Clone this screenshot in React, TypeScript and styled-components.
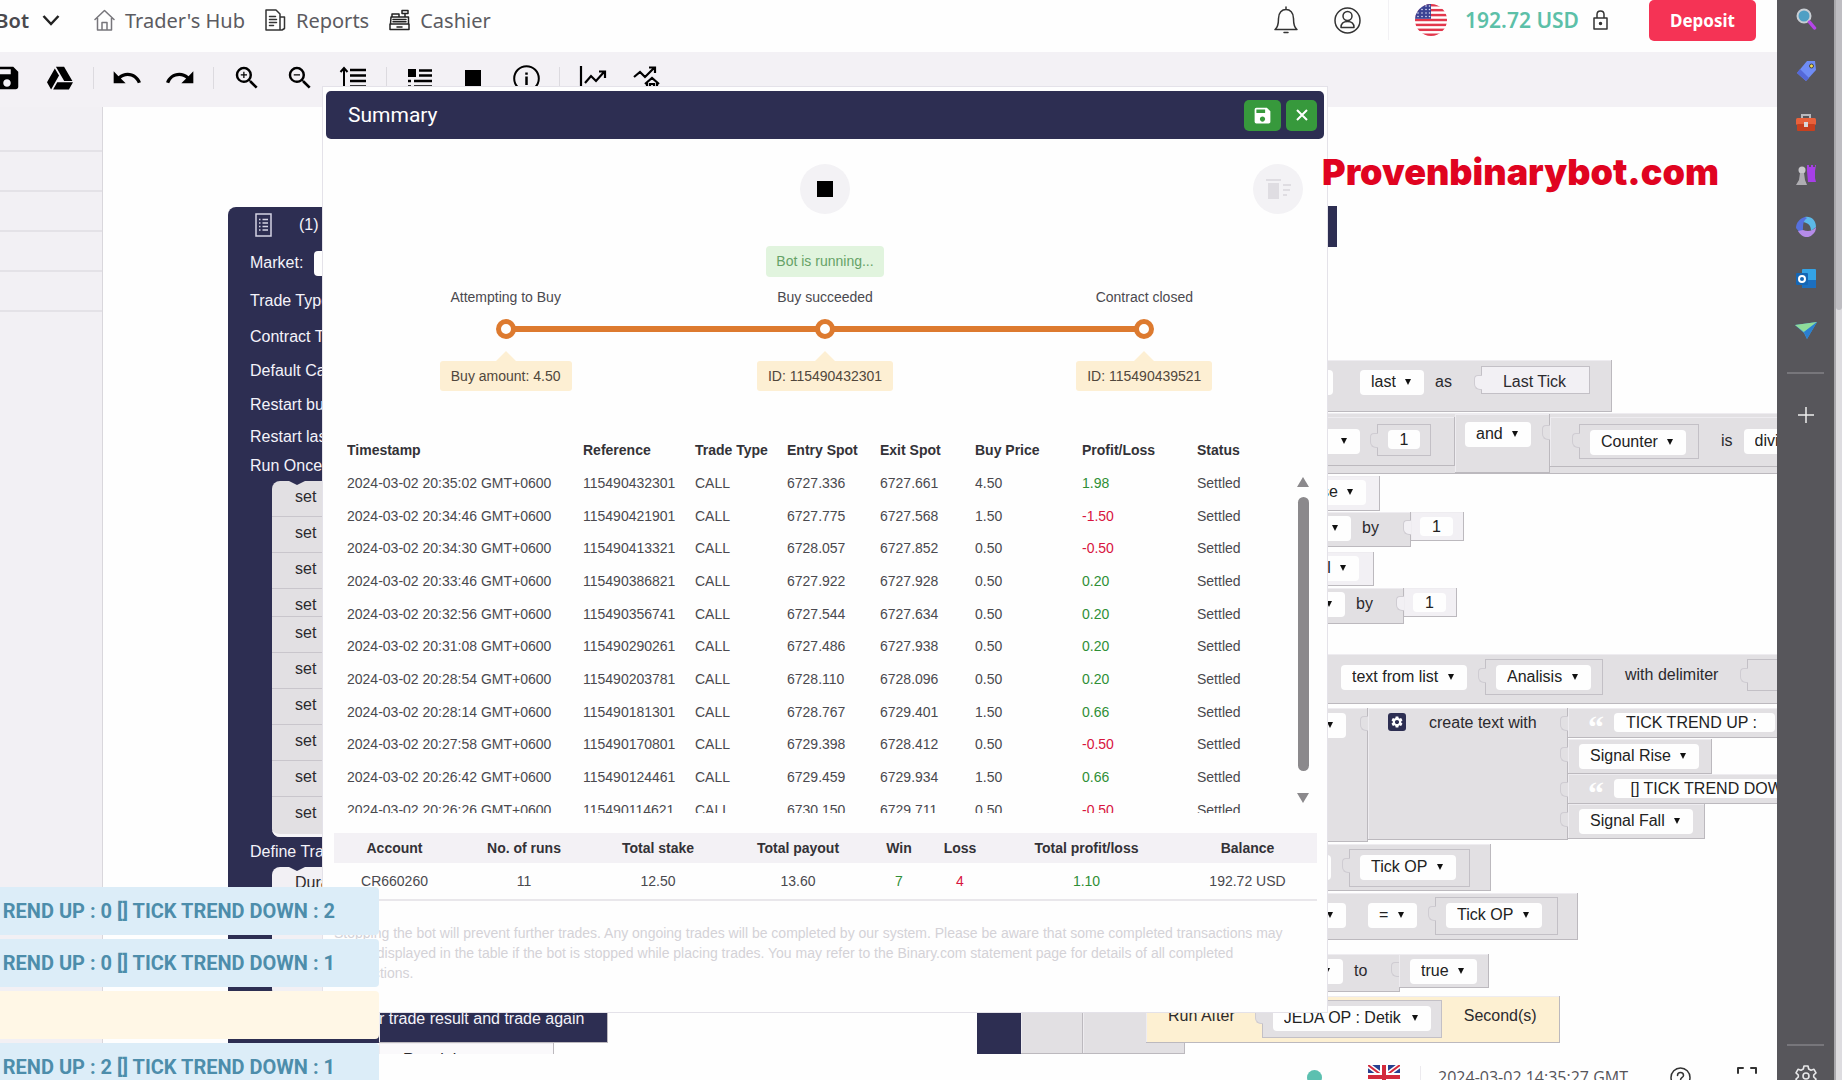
import React from "react";
import styled, { createGlobalStyle, css } from "styled-components";
import { MdSave, MdOutlineZoomIn, MdOutlineZoomOut, MdUndo, MdRedo, MdSettings } from "react-icons/md";
import { FaGoogleDrive } from "react-icons/fa";

const navy = "#2d2e52";
const grey = "#e2e0e3";
const pale = "#f2f0f4";
const edge = "#bcb9be";

const Global = createGlobalStyle`
  *, *::before, *::after { box-sizing: border-box; }
  body { margin: 0; background: #fefefe; font-family: "Liberation Sans", Arial, sans-serif; font-size: 16px; overflow: hidden; }
  button, input, select { font: inherit; color: inherit; }
  svg { display: block; flex: none; }
`;

/* ---------- shell ---------- */
const Page = styled.div`
  position: relative;
  display: flex;
  height: 100vh;
  overflow: hidden;
`;
const Main = styled.main`
  flex: 1;
  min-width: 0;
  display: flex;
  flex-direction: column;
  overflow: hidden;
`;

const Header = styled.header`
  display: flex;
  align-items: center;
  height: 52px;
  padding: 0 21px 12px 0;
  font-family: "Noto Sans", sans-serif;
  font-size: 20px;
  color: #5c5b61;
  background: #fefefe;
`;
const Brand = styled.button`
  display: flex;
  align-items: center;
  gap: 13px;
  padding: 0;
  margin-right: 34px;
  border: 0;
  background: none;
  color: #4a494e;
  font-weight: 600;
`;
const BrandName = styled.span`
  display: flex;
  justify-content: flex-end;
  width: 29px;
`;
const Nav = styled.nav`
  display: flex;
  gap: 20px;
`;
const NavLink = styled.a`
  display: flex;
  align-items: center;
  gap: 10px;
  color: inherit;
  text-decoration: none;
  white-space: nowrap;
`;
const Account = styled.div`
  display: flex;
  align-items: center;
  height: 40px;
  margin-left: auto;
`;
const IconButton = styled.button`
  display: flex;
  padding: 0;
  margin-right: 36px;
  border: 0;
  background: none;
`;
const HeaderRule = styled.span`
  width: 1px;
  height: 40px;
  margin: 0 26px 0 -9px;
  background: #f2f1f4;
`;
const Balance = styled.span`
  display: flex;
  align-items: center;
  gap: 14px;
  margin: 0 41px 0 18px;
  color: #5cc0a8;
  font-size: 21px;
  font-weight: 600;
`;
const Deposit = styled.button`
  width: 107px;
  height: 41px;
  padding: 0;
  border: 0;
  border-radius: 5px;
  background: #f53355;
  color: #fff;
  font-family: "Noto Sans", sans-serif;
  font-size: 17px;
  font-weight: 700;
`;

const Toolbar = styled.div`
  display: flex;
  align-items: center;
  height: 55px;
  padding-bottom: 3px;
  background: #f3f1f5;
`;
const ToolGroup = styled.div`
  display: flex;
  align-items: center;
  gap: 25px;
  height: 22px;
  padding: 0 19px;
  border-right: 1px solid #dcdadf;
  &:first-child { padding-left: 0; margin-left: -7px; }
  &:last-child { border: 0; }
`;
const Tool = styled.button`
  display: flex;
  align-items: center;
  justify-content: center;
  width: 28px;
  height: 28px;
  padding: 0;
  border: 0;
  background: none;
  color: #000;
`;

/* ---------- workspace ---------- */
const Workspace = styled.section`
  flex: 1;
  min-height: 0;
  display: flex;
  overflow: hidden;
`;
const Toolbox = styled.ul`
  width: 103px;
  margin: 0;
  padding: 5px 0 0;
  list-style: none;
  background: ${pale};
  border-right: 1px solid #d9d7dc;
`;
const ToolboxRow = styled.li`
  height: 40px;
  border-bottom: 2px solid #e4e2e7;
`;
const Canvas = styled.div`
  position: relative;
  flex: 1;
  overflow: hidden;
  background: #fefefe;
`;

/* Nodes keep workspace coordinates, which start at the page's origin. */
type BlockProps = { $x: number; $y: number; $w: number; $h: number; $tone?: string; $pad?: string; $tab?: boolean };
const tab = css`
  &::before {
    content: "";
    position: absolute;
    left: -8px;
    top: 8px;
    width: 8px;
    height: 15px;
    border: 1px solid #cfccd2;
    border-right: 0;
    border-radius: 4px 0 0 6px;
    background: inherit;
  }
`;
const Block = styled.div<BlockProps>`
  position: absolute;
  left: ${(p) => p.$x - 103}px;
  top: ${(p) => p.$y - 107}px;
  width: ${(p) => p.$w}px;
  height: ${(p) => p.$h}px;
  display: flex;
  align-items: flex-start;
  padding: ${(p) => p.$pad ?? "0"};
  color: #2b2a2e;
  white-space: nowrap;
  background: ${(p) => p.$tone ?? grey};
  box-shadow: inset -1px -1px 0 ${edge}, inset 1px 1px 0 #eeecf0;
  ${(p) => p.$tab && tab}
`;
const Socket = styled.div<{ $w?: number; $h: number; $m?: string; $tone?: string }>`
  position: relative;
  display: flex;
  align-items: flex-start;
  flex: none;
  width: ${(p) => (p.$w ? p.$w + "px" : "auto")};
  height: ${(p) => p.$h}px;
  padding: 5px 10px;
  margin: ${(p) => p.$m ?? "0"};
  border: 1px solid #c3c0c6;
  background: ${(p) => p.$tone ?? grey};
  ${tab}
`;
const Word = styled.span<{ $m?: string }>`
  line-height: 24px;
  margin: ${(p) => p.$m ?? "0 11px"};
`;
const Drop = styled.label`
  position: relative;
  display: flex;
  flex: none;
  height: 25px;
  background: #fefefe;
  border-radius: 4px;
  svg { position: absolute; right: 13px; top: 9px; pointer-events: none; }
`;
const Select = styled.select<{ $w?: number }>`
  appearance: none;
  width: ${(p) => (p.$w ? p.$w + "px" : "auto")};
  height: 25px;
  padding: 0 28px 2px 11px;
  border: 0;
  background: transparent;
  color: #222;
`;
const Value = styled.input<{ $w: number; $left?: boolean }>`
  flex: none;
  width: ${(p) => p.$w}px;
  height: 19px;
  padding: ${(p) => (p.$left ? "0 12px" : "0")};
  border: 0;
  border-radius: 4px;
  background: #fefefe;
  text-align: ${(p) => (p.$left ? "left" : "center")};
  color: #222;
`;
const Quote = styled.span`
  flex: none;
  width: 46px;
  padding-left: 20px;
  font-family: "Liberation Serif", serif;
  font-size: 32px;
  font-weight: 700;
  line-height: 28px;
  height: 20px;
  overflow: hidden;
  color: #fefefe;
`;
const Gear = styled.button`
  display: flex;
  align-items: center;
  justify-content: center;
  width: 18px;
  height: 18px;
  padding: 0;
  margin: 5px 12px 0 20px;
  border: 0;
  border-radius: 3px;
  background: ${navy};
  color: #fff;
`;
const TailText = styled.span`
  color: #f4f3fa;
  line-height: 22px;
`;
const Label = styled.span`
  padding-left: 11px;
  line-height: 20px;
`;
const Lowered = styled.div`
  padding-top: 5px;
`;

const Root = styled.div<{ $x: number; $y: number; $w: number; $h: number }>`
  position: absolute;
  left: ${(p) => p.$x - 103}px;
  top: ${(p) => p.$y - 107}px;
  width: ${(p) => p.$w}px;
  height: ${(p) => p.$h}px;
  border-radius: 8px 0 0 0;
  background: ${navy};
  color: #f4f3fa;
  overflow: hidden;
  white-space: nowrap;
`;
const RootRow = styled.div<{ $h: number }>`
  display: flex;
  align-items: center;
  gap: 11px;
  height: ${(p) => p.$h}px;
  padding-left: 22px;
`;
const RootTitle = styled.div`
  display: flex;
  align-items: center;
  gap: 27px;
  height: 36px;
  padding-left: 27px;
`;
const Stack = styled.div<{ $tone: string }>`
  position: relative;
  margin-left: 44px;
  border-radius: 8px 0 0 8px;
  background: ${(p) => p.$tone};
  color: #2b2a2e;
  &::before {
    content: "";
    position: absolute;
    left: 17px;
    top: 0;
    border: 8px solid transparent;
    border-top: 4px solid ${navy};
    border-bottom: 0;
  }
`;
const SetRow = styled.div<{ $h: number }>`
  height: ${(p) => p.$h}px;
  padding-left: 23px;
  line-height: 32px;
  border-bottom: 1px solid #c9c6cc;
  &:last-child { border-bottom: 3px solid #f6f5f8; border-radius: 0 0 0 8px; }
`;

/* ---------- footer ---------- */
const Footer = styled.footer`
  display: flex;
  justify-content: flex-end;
  height: 26px;
  padding-right: 20px;
  background: #fefefe;
  font-family: "Open Sans", sans-serif;
  font-size: 16px;
  color: #55545a;
`;
const FooterItems = styled.div`
  display: flex;
  align-items: center;
  height: 46px;
`;
const Dot = styled.span`
  width: 15px;
  height: 15px;
  margin-right: 46px;
  border-radius: 50%;
  background: #5cc0b0;
`;
const FooterTime = styled.span`
  padding-left: 17px;
  margin: 0 42px 0 20px;
  border-left: 1px solid #eceaee;
`;
const FullScreen = styled.button`
  padding: 0;
  margin-left: 46px;
  border: 0;
  background: none;
`;

/* ---------- browser side strip ---------- */
const Strip = styled.aside`
  display: flex;
  flex-direction: column;
  align-items: center;
  gap: 30px;
  width: 57px;
  padding-top: 8px;
  background: #57565b;
`;
const StripButton = styled.button`
  display: flex;
  padding: 0;
  border: 0;
  background: none;
`;
const StripRule = styled.span`
  width: 37px;
  height: 2px;
  background: #77767b;
`;
const StripEnd = styled.div`
  display: flex;
  flex-direction: column;
  align-items: center;
  gap: 18px;
  margin: auto 0 -8px;
`;
const PageScroll = styled.div`
  width: 8px;
  background: #dddce0;
  border-left: 2px solid #a9a8ac;
`;
const PageThumb = styled.div`
  height: 310px;
  background: #bebdc2;
  border-radius: 0 0 4px 4px;
`;

/* ---------- summary dialog ---------- */
const Dialog = styled.section`
  position: absolute;
  left: 322px;
  top: 86px;
  width: 1006px;
  height: 927px;
  padding: 4px 3px;
  border: 1px solid #e4e2e9;
  background: #fefefe;
  font-size: 14px;
  color: #4a494e;
`;
const TitleBar = styled.header`
  display: flex;
  align-items: center;
  gap: 5px;
  height: 48px;
  padding: 0 7px 0 22px;
  border-radius: 5px;
  background: ${navy};
`;
const Title = styled.h2`
  margin: 0 auto 0 0;
  font-family: Roboto, sans-serif;
  font-size: 21px;
  font-weight: 400;
  color: #fff;
`;
const TitleButton = styled.button<{ $w: number }>`
  display: flex;
  align-items: center;
  justify-content: center;
  width: ${(p) => p.$w}px;
  height: 31px;
  padding: 0;
  border: 0;
  border-radius: 5px;
  background: #37993c;
  color: #fff;
`;
const Controls = styled.div`
  display: grid;
  grid-template-columns: 1fr auto 1fr;
  padding: 25px 21px 0;
`;
const Round = styled.button<{ $col: number }>`
  grid-column: ${(p) => p.$col};
  justify-self: end;
  display: flex;
  align-items: center;
  justify-content: center;
  width: 50px;
  height: 50px;
  padding: 0;
  border: 0;
  border-radius: 50%;
  background: #f3f2f5;
`;
const Running = styled.p`
  width: fit-content;
  margin: 32px auto 10px;
  padding: 0 10px;
  border-radius: 4px;
  background: #e1f4de;
  color: #66a267;
  line-height: 31px;
`;
const Steps = styled.ol`
  display: grid;
  grid-template-columns: repeat(3, 1fr);
  margin: 0 20px;
  padding: 0;
  list-style: none;
`;
const Step = styled.li`
  display: flex;
  flex-direction: column;
  align-items: center;
  line-height: 20px;
`;
const Track = styled.div<{ $from: boolean; $to: boolean }>`
  display: flex;
  align-items: center;
  align-self: stretch;
  margin: 12px 0 22px;
  &::before, &::after { content: ""; flex: 1; height: 6px; }
  &::before { background: ${(p) => (p.$from ? "#dd7a2f" : "transparent")}; }
  &::after { background: ${(p) => (p.$to ? "#dd7a2f" : "transparent")}; }
`;
const Knot = styled.span`
  width: 20px;
  height: 20px;
  margin: 0 -1px;
  border: 5px solid #dd7a2f;
  border-radius: 50%;
`;
const Tip = styled.span`
  position: relative;
  padding: 0 11px;
  border-radius: 3px;
  background: #fdefd3;
  color: #51473c;
  line-height: 30px;
  &::before {
    content: "";
    position: absolute;
    left: 50%;
    top: -10px;
    margin-left: -10px;
    border: 10px solid transparent;
    border-top: 0;
    border-bottom-color: #fdefd3;
  }
`;
const History = styled.div`
  display: flex;
  height: 380px;
  margin: 42px 15px 0 21px;
  overflow: hidden;
`;
const Trades = styled.table`
  flex: 1;
  align-self: flex-start;
  table-layout: fixed;
  border-collapse: collapse;
  text-align: left;
  th, td { height: 33px; padding: 0; white-space: nowrap; }
  th { color: #333237; }
  tbody tr:nth-child(3n) td { height: 32px; }
`;
const Money = styled.td<{ $n: number }>`
  color: ${(p) => (p.$n < 0 ? "#d8153f" : "#2f8f36")};
`;
const ScrollBar = styled.div`
  display: flex;
  flex-direction: column;
  align-items: center;
  justify-content: space-between;
  width: 12px;
  margin: 44px 0 10px;
`;
const Thumb = styled.div`
  width: 11px;
  height: 274px;
  margin-bottom: 13px;
  border-radius: 6px;
  background: #8b898c;
`;
const Totals = styled.table`
  width: 983px;
  margin: 20px 0 0 8px;
  table-layout: fixed;
  border-collapse: collapse;
  text-align: center;
  th { height: 30px; padding: 0; background: #f3f1f5; color: #333237; }
  td { height: 37px; padding: 0; border-bottom: 2px solid #e9e7eb; }
`;
const Note = styled.p`
  margin: 22px 24px 0 8px;
  line-height: 20px;
  color: #d4d2d7;
`;

/* ---------- overlays ---------- */
const Notices = styled.div`
  position: absolute;
  left: 0;
  top: 887px;
  display: flex;
  flex-direction: column;
  gap: 4px;
  width: 379px;
`;
const Notice = styled.div<{ $plain?: boolean }>`
  display: flex;
  align-items: center;
  justify-content: flex-end;
  height: 48px;
  padding-right: 44px;
  border-radius: 0 4px 4px 0;
  background: ${(p) => (p.$plain ? "#fff7e6" : "#dcedf8")};
  color: #4d8dab;
  font-family: Roboto, sans-serif;
  font-size: 20px;
  font-weight: 700;
  white-space: nowrap;
`;
const Watermark = styled.div`
  position: absolute;
  left: 1322px;
  top: 150px;
  font-family: Inter, sans-serif;
  font-size: 36px;
  font-weight: 900;
  line-height: 44px;
  color: #e00320;
`;

/* ---------- small pieces ---------- */
const Pick = ({ text, w }: { text: string; w?: number }) => (
  <Drop>
    <Select $w={w} aria-label={text || "option"} defaultValue={text}>
      <option>{text}</option>
    </Select>
    <svg width="6" height="6" viewBox="0 0 6 6"><path d="M0 0h6L3 6z" fill="#111" /></svg>
  </Drop>
);
const line = (w = 1.5) => ({ fill: "none", stroke: "#333", strokeWidth: w, strokeLinecap: "round" as const, strokeLinejoin: "round" as const });

const HomeIcon = () => (
  <svg width="21" height="22" viewBox="0 0 21 22" {...line()} stroke="#77767b">
    <path d="M1 10.500 10.500 1.500 20 10.500M3.500 9v12h14V9M8 21v-7.500h5V21" />
  </svg>
);
const ReportIcon = () => (
  <svg width="21" height="22" viewBox="0 0 21 22" {...line()}>
    <path d="M1 1h10l4 4v16H1zM15 8h4.500v11.500L17 21h-3M4.500 7.500h6M4.500 10.500h7M4.500 13.500h7M4.500 16.500h4" />
  </svg>
);
const CashierIcon = () => (
  <svg width="21" height="22" viewBox="0 0 21 22" {...line()} stroke="#222">
    <path d="M13 1.500h6v3h-6zM16 4.500v3M3 5h7v3H3zM2 8h17.500v7H1.500zM1 15h19v5.500H1zM8 18h5M4 10.500h13M4 12.700h13" />
  </svg>
);
const UsFlag = () => (
  <svg width="32" height="32" viewBox="0 0 32 32">
    <defs><clipPath id="us"><circle cx="16" cy="16" r="16" /></clipPath></defs>
    <g clipPath="url(#us)">
      <rect width="32" height="32" fill="#fff" />
      {[0, 1, 2, 3, 4, 5, 6].map((i) => <rect key={i} y={i * 4.92} width="32" height="2.460" fill="#e2374c" />)}
      <rect width="16" height="14.800" fill="#3b4394" />
      {[2, 5.5, 9, 12.5].map((y) => [3, 7, 11, 14.5].map((x) => <circle key={x + "-" + y} cx={x} cy={y} r="0.800" fill="#dfe2f5" />))}
    </g>
  </svg>
);
const UkFlag = () => (
  <svg width="32" height="24" viewBox="0 0 32 24">
    <rect width="32" height="24" fill="#27408f" />
    <path d="M0 0 32 24M32 0 0 24" stroke="#fff" strokeWidth="5" />
    <path d="M0 0 32 24M32 0 0 24" stroke="#d32a3c" strokeWidth="2" />
    <path d="M16 0v24M0 12h32" stroke="#fff" strokeWidth="8" />
    <path d="M16 0v24M0 12h32" stroke="#d32a3c" strokeWidth="4" />
  </svg>
);

const stripIcons: [string, React.ReactNode][] = [
  ["Search", <><circle cx="9" cy="8" r="6.500" fill="#4f9fc4" stroke="#c9ced4" strokeWidth="2" /><path d="m14.500 14 5 6" stroke="#b545e8" strokeWidth="3.500" strokeLinecap="round" /></>],
  ["Shopping", <><path d="M12 1h8l1 9-10 11-9-8z" fill="#6f8cf5" /><path d="m2 13 9 8 3-3-9-9z" fill="#5468d8" /><circle cx="16.500" cy="6" r="2" fill="#f1d94c" stroke="#444" /></>],
  ["Tools", <><path d="M7 6V3h8v3" fill="none" stroke="#b9b9bd" strokeWidth="2" /><rect x="1" y="6" width="20" height="7" rx="1.500" fill="#e8613b" /><rect x="2" y="12" width="18" height="7" rx="1" fill="#c7401f" /><rect x="9" y="10" width="4" height="5" fill="#d9d9dc" /></>],
  ["Games", <><circle cx="7" cy="6" r="3.500" fill="#c7c6ca" /><path d="M5 9h4l1 7 2 5H1l3-5z" fill="#aeadb2" /><path d="M12 1h2v2h2V1h2v2h2V1h1l-1 6v7l1 4h-8l-1-11z" fill="#a63fe6" /></>],
  ["Microsoft 365", <><path d="M10 1c6-1 11 3 11 10l-5 4c0-5-2-8-8-9z" fill="#5cb9e8" /><path d="M10 1C4 3 1 7 1 12l4 5c3-1 3-3 3-6 0-4 1-7 4-9z" fill="#5670dd" /><path d="M3 15c3 6 10 8 14 4 3-2 4-5 4-8-3 4-8 5-13 3z" fill="#b58be8" /></>],
  ["Outlook", <><rect x="7" y="1" width="14" height="19" rx="1" fill="#33a3e6" /><path d="M7 12h14v8H7z" fill="#1c6fbf" /><rect x="1" y="5" width="12" height="12" rx="1" fill="#1566b4" /><circle cx="7" cy="11" r="3" fill="none" stroke="#fff" strokeWidth="2" /></>],
  ["Drop", <><path d="m0 5 22-3-10 17-3-6z" fill="#3f9fe0" /><path d="m0 5 22-3L9 12z" fill="#8fdc9a" /><path d="m9 12 13-10-10 17z" fill="#2b7fd0" /></>],
];

type Trade = [string, string, string, string, string, number];
const trades: Trade[] = [
  ["20:35:02", "115490432301", "6727.336", "6727.661", "4.50", 1.98],
  ["20:34:46", "115490421901", "6727.775", "6727.568", "1.50", -1.5],
  ["20:34:30", "115490413321", "6728.057", "6727.852", "0.50", -0.5],
  ["20:33:46", "115490386821", "6727.922", "6727.928", "0.50", 0.2],
  ["20:32:56", "115490356741", "6727.544", "6727.634", "0.50", 0.2],
  ["20:31:08", "115490290261", "6727.486", "6727.938", "0.50", 0.2],
  ["20:28:54", "115490203781", "6728.110", "6728.096", "0.50", 0.2],
  ["20:28:14", "115490181301", "6728.767", "6729.401", "1.50", 0.66],
  ["20:27:58", "115490170801", "6729.398", "6728.412", "0.50", -0.5],
  ["20:26:42", "115490124461", "6729.459", "6729.934", "1.50", 0.66],
  ["20:26:26", "115490114621", "6730.150", "6729.711", "0.50", -0.5],
];
const steps = [
  ["Attempting to Buy", "Buy amount: 4.50"],
  ["Buy succeeded", "ID: 115490432301"],
  ["Contract closed", "ID: 115490439521"],
];

function TopBar() {
  return (
    <Header>
      <Brand>
        <BrandName>Bot</BrandName>
        <svg width="18" height="12" viewBox="0 0 18 12"><path d="m1.500 2 7.500 8 7.500-8" fill="none" stroke="#222" strokeWidth="2.500" /></svg>
      </Brand>
      <Nav>
        <NavLink href="#hub"><HomeIcon />Trader's Hub</NavLink>
        <NavLink href="#reports"><ReportIcon />Reports</NavLink>
        <NavLink href="#cashier"><CashierIcon />Cashier</NavLink>
      </Nav>
      <Account>
        <IconButton aria-label="Notifications">
          <svg width="24" height="28" viewBox="0 0 24 28" {...line()}><path d="M12 1v2M1 23.500h22c-3-2-3.500-5-3.500-11C19.500 6.500 16 3.500 12 3.500S4.500 6.500 4.500 12.500c0 6-.5 9-3.500 11zM10 26.500h4" /></svg>
        </IconButton>
        <IconButton aria-label="Account">
          <svg width="27" height="27" viewBox="0 0 27 27" {...line()}><circle cx="13.500" cy="13.500" r="12.500" /><circle cx="13.500" cy="9" r="4.500" /><path d="M7 20.500c0-4 2-6 6.500-6s6.500 2 6.500 6z" /></svg>
        </IconButton>
        <HeaderRule />
        <UsFlag />
        <Balance>
          192.72 USD
          <svg width="15" height="20" viewBox="0 0 15 20" {...line()}><path d="M1 8h13v11H1zM4 8V4.500C4 2.500 5.500 1 7.500 1S11 2.500 11 4.500V8" /><circle cx="7.500" cy="13.500" r="1" fill="#333" /></svg>
        </Balance>
        <Deposit>Deposit</Deposit>
      </Account>
    </Header>
  );
}

function Tools() {
  return (
    <Toolbar role="toolbar">
      <ToolGroup>
        <Tool aria-label="Save"><MdSave size={30} /></Tool>
        <Tool aria-label="Google Drive"><FaGoogleDrive size={26} /></Tool>
      </ToolGroup>
      <ToolGroup>
        <Tool aria-label="Undo"><MdUndo size={32} /></Tool>
        <Tool aria-label="Redo"><MdRedo size={32} /></Tool>
      </ToolGroup>
      <ToolGroup>
        <Tool aria-label="Zoom in"><MdOutlineZoomIn size={30} /></Tool>
        <Tool aria-label="Zoom out"><MdOutlineZoomOut size={30} /></Tool>
        <Tool aria-label="Rearrange">
          <svg width="28" height="24" viewBox="0 0 28 24"><path d="M5 2v20M1.500 6 5 2l3.500 4M1.500 21h7" fill="none" stroke="#000" strokeWidth="2" /><path d="M11 4h16M11 9.500h16M11 15h16M11 20.500h16" stroke="#000" strokeWidth="2.500" /></svg>
        </Tool>
      </ToolGroup>
      <ToolGroup>
        <Tool aria-label="Summary">
          <svg width="26" height="24" viewBox="0 0 26 24"><path d="M1 3h8v8H1z" /><path d="M12 4.500h13M12 9.500h13M1 15h3M7 15h18M1 20.500h3M7 20.500h18" stroke="#000" strokeWidth="2.500" /></svg>
        </Tool>
        <Tool aria-label="Stop"><svg width="16" height="16"><path d="M0 0h16v16H0z" /></svg></Tool>
        <Tool aria-label="Info">
          <svg width="27" height="27" viewBox="0 0 27 27" fill="none" stroke="#000" strokeWidth="2"><circle cx="13.500" cy="13.500" r="12.300" /><path d="M13.500 11.500V20M13.500 7.500v2.200" strokeWidth="2.500" /></svg>
        </Tool>
      </ToolGroup>
      <ToolGroup>
        <Tool aria-label="Chart">
          <svg width="28" height="26" viewBox="0 0 28 26" fill="none" stroke="#000" strokeWidth="2.200"><path d="M2 1v24M6 18l6-7 5 5 8-9M20 6.500h6V13" /></svg>
        </Tool>
        <Tool aria-label="Trading view">
          <svg width="28" height="26" viewBox="0 0 28 26" fill="none" stroke="#000" strokeWidth="2.200"><path d="m2 12 6-5 5 5 9-9M17 2.500h6V8M13 19l7-6 7 6M15 17v7M25 17v7M18 23v-4h4v4" /></svg>
        </Tool>
      </ToolGroup>
    </Toolbar>
  );
}

function Blocks() {
  return (
    <Canvas>
      <Root $x={228} $y={207} $w={380} $h={836}>
        <RootTitle>
          <svg width="17" height="24" viewBox="0 0 17 24" fill="none" stroke="#d4d3e4" strokeWidth="1.500"><path d="M1 1h15v22H1zM4 6.500h1.500M7.500 6.500H13M4 10h1.500M7.500 10H13M4 13.500h1.500M7.500 13.500H13M4 17h1.500M7.500 17H13" /></svg>
          (1)
        </RootTitle>
        <RootRow $h={40}>Market: <Pick text="" w={120} /></RootRow>
        <RootRow $h={36}>Trade Type:</RootRow>
        <RootRow $h={36}>Contract Type:</RootRow>
        <RootRow $h={32}>Default Candle:</RootRow>
        <RootRow $h={36}>Restart buy</RootRow>
        <RootRow $h={28}>Restart last</RootRow>
        <RootRow $h={30}>Run Once</RootRow>
        <Stack $tone={grey}>
          {[36, 36, 36, 28, 36, 36, 36, 36, 36, 40].map((h, i) => <SetRow key={i} $h={h}>set</SetRow>)}
        </Stack>
        <RootRow $h={30}>Define Trade</RootRow>
        <Stack $tone={pale}><SetRow $h={130}>Duration:</SetRow></Stack>
      </Root>
      <Block $x={379} $y={1008} $w={229} $h={35} $tone={navy}>
        <TailText>r trade result and trade again</TailText>
      </Block>
      <Block $x={379} $y={1043} $w={175} $h={40} $tone="#faf9fb" $pad="5px 24px"><Word $m="0">Result is</Word></Block>

      <Root $x={1200} $y={206} $w={137} $h={41} />

      <Block $x={1270} $y={360} $w={342} $h={52} $pad="10px 24px 0 0">
        <Pick text="" w={63} />
        <Word $m="0 27px 0 0" />
        <Pick text="last" />
        <Word>as</Word>
        <Socket $w={109} $h={28} $m="-4px 0 0 18px" $tone={pale}><Label>Last Tick</Label></Socket>
      </Block>

      <Block $x={1270} $y={413} $w={520} $h={61} />
      <Block $x={1270} $y={417} $w={185} $h={49} $pad="12px 0 0">
        <Pick text="" w={90} />
        <Socket $w={54} $h={32} $m="-5px 0 0 17px"><Value $w={32} aria-label="number" defaultValue="1" /></Socket>
      </Block>
      <Block $x={1455} $y={414} $w={95} $h={59} $pad="8px 10px"><Pick text="and" /></Block>
      <Block $x={1550} $y={417} $w={240} $h={50} $tab $pad="7px 0 0 29px">
        <Socket $w={120} $h={35}><Pick text="Counter" /></Socket>
        <Word $m="5px 11px 0 22px">is</Word>
        <Lowered><Pick text="divisible by" /></Lowered>
      </Block>

      <Block $x={1270} $y={476} $w={110} $h={35} $tone={pale} $pad="4px 0 0 23px"><Pick text="false" /></Block>
      <Block $x={1270} $y={512} $w={141} $h={35} $pad="4px 0 0"><Pick text="" w={81} /><Word>by</Word></Block>
      <Block $x={1411} $y={512} $w={53} $h={29} $tone={pale} $tab $pad="5px 0 0 9px"><Value $w={33} aria-label="step" defaultValue="1" /></Block>
      <Block $x={1270} $y={552} $w={104} $h={34} $tone={pale} $pad="4px 0 0 23px"><Pick text="Sell" /></Block>
      <Block $x={1270} $y={588} $w={134} $h={36} $pad="4px 0 0"><Pick text="" w={75} /><Word>by</Word></Block>
      <Block $x={1404} $y={588} $w={53} $h={29} $tone={pale} $tab $pad="5px 0 0 9px"><Value $w={33} aria-label="step" defaultValue="1" /></Block>

      <Block $x={1290} $y={654} $w={500} $h={50} $pad="11px 0 0 51px">
        <Pick text="text from list" />
        <Socket $w={118} $h={36} $m="-6px 0 0 18px"><Pick text="Analisis" /></Socket>
        <Word $m="-2px 29px 0 22px">with delimiter</Word>
        <Socket $w={60} $h={32} $m="-6px 0 0"><Quote>“</Quote></Socket>
      </Block>

      <Block $x={1290} $y={708} $w={78} $h={134} $pad="5px 0 0"><Pick text="" w={56} /></Block>
      <Block $x={1368} $y={708} $w={200} $h={132} $tab>
        <Gear aria-label="Block settings"><MdSettings size={14} /></Gear>
        <Word $m="3px 11px">create text with</Word>
      </Block>
      <Block $x={1568} $y={708} $w={220} $h={30} $tab $pad="5px 0 0"><Quote>“</Quote><Value $w={161} $left aria-label="text" defaultValue="TICK TREND UP : " /></Block>
      <Block $x={1568} $y={739} $w={144} $h={35} $tab $pad="5px 11px"><Pick text="Signal Rise" /></Block>
      <Block $x={1568} $y={774} $w={220} $h={30} $tab $pad="5px 0 0"><Quote>“</Quote><Value $w={200} $left aria-label="text" defaultValue=" [] TICK TREND DOWN : " /></Block>
      <Block $x={1568} $y={804} $w={137} $h={35} $tab $pad="5px 11px"><Pick text="Signal Fall" /></Block>

      <Block $x={1270} $y={844} $w={221} $h={47} $pad="11px 0 0"><Pick text="" w={61} /><Socket $w={121} $h={38} $m="-6px 0 0 18px"><Pick text="Tick OP" /></Socket></Block>
      <Block $x={1270} $y={893} $w={308} $h={47} $pad="10px 0 0">
        <Pick text="" w={76} />
        <Word $m="0 11px" />
        <Pick text="=" w={49} />
        <Socket $w={123} $h={38} $m="-6px 0 0 18px"><Pick text="Tick OP" /></Socket>
      </Block>
      <Block $x={1270} $y={954} $w={130} $h={38} $pad="5px 0 0"><Pick text="" w={73} /><Word>to</Word></Block>
      <Block $x={1399} $y={954} $w={90} $h={34} $tab $pad="5px 11px"><Pick text="true" /></Block>

      <Root $x={977} $y={1000} $w={44} $h={54} />
      <Block $x={1021} $y={1000} $w={62} $h={54} />
      <Block $x={1083} $y={1000} $w={102} $h={54} />
      <Block $x={1146} $y={996} $w={414} $h={47} $tone="#fdf0d2" $pad="8px 22px">
        <Word $m="0 27px 0 0">Run After</Word>
        <Socket $w={180} $h={38} $m="-4px 22px 0 0"><Pick text="JEDA OP : Detik" /></Socket>
        <Word $m="0">Second(s)</Word>
      </Block>
    </Canvas>
  );
}

function Summary() {
  return (
    <Dialog role="dialog" aria-label="Summary">
      <TitleBar>
        <Title>Summary</Title>
        <TitleButton $w={37} aria-label="Save"><MdSave size={21} /></TitleButton>
        <TitleButton $w={31} aria-label="Close"><svg width="12" height="12" viewBox="0 0 12 12"><path d="m1 1 10 10M11 1 1 11" stroke="#fff" strokeWidth="2" /></svg></TitleButton>
      </TitleBar>
      <Controls>
        <Round $col={2} aria-label="Stop bot"><svg width="16" height="16"><path d="M0 0h16v16H0z" /></svg></Round>
        <Round $col={3} aria-label="Clear"><svg width="25" height="20" viewBox="0 0 25 20" fill="#dfdde2"><path d="M0 0h15v2H0zM2 4h11v16H2zM17 5h8v2h-8zM17 10h7v2h-7zM17 15h4v2h-4z" /></svg></Round>
      </Controls>
      <Running>Bot is running...</Running>
      <Steps>
        {steps.map(([name, tip], i) => (
          <Step key={name}>
            {name}
            <Track $from={i > 0} $to={i < 2}><Knot /></Track>
            <Tip>{tip}</Tip>
          </Step>
        ))}
      </Steps>
      <History>
        <Trades>
          <colgroup>{[236, 112, 92, 93, 95, 107, 115, 100].map((w, i) => <col key={i} width={w} />)}</colgroup>
          <thead>
            <tr>{["Timestamp", "Reference", "Trade Type", "Entry Spot", "Exit Spot", "Buy Price", "Profit/Loss", "Status"].map((h) => <th key={h}>{h}</th>)}</tr>
          </thead>
          <tbody>
            {trades.map(([time, ref, entry, exit, price, pl]) => (
              <tr key={ref}>
                <td>2024-03-02 {time} GMT+0600</td>
                <td>{ref}</td>
                <td>CALL</td>
                <td>{entry}</td>
                <td>{exit}</td>
                <td>{price}</td>
                <Money $n={pl}>{pl.toFixed(2)}</Money>
                <td>Settled</td>
              </tr>
            ))}
          </tbody>
        </Trades>
        <ScrollBar>
          <svg width="12" height="10"><path d="M6 0 12 10H0z" fill="#8b898c" /></svg>
          <Thumb />
          <svg width="12" height="10"><path d="M0 0h12L6 10z" fill="#8b898c" /></svg>
        </ScrollBar>
      </History>
      <Totals>
        <colgroup>{[121, 138, 130, 150, 52, 70, 183, 139].map((w, i) => <col key={i} width={w} />)}</colgroup>
        <thead>
          <tr>{["Account", "No. of runs", "Total stake", "Total payout", "Win", "Loss", "Total profit/loss", "Balance"].map((h) => <th key={h}>{h}</th>)}</tr>
        </thead>
        <tbody>
          <tr>
            <td>CR660260</td><td>11</td><td>12.50</td><td>13.60</td>
            <Money $n={1}>7</Money><Money $n={-1}>4</Money><Money $n={1}>1.10</Money>
            <td>192.72 USD</td>
          </tr>
        </tbody>
      </Totals>
      <Note>
        Stopping the bot will prevent further trades. Any ongoing trades will be completed by our system. Please be aware that some completed transactions may not be displayed in the table if the bot is stopped while placing trades. You may refer to the Binary.com statement page for details of all completed transactions.
      </Note>
    </Dialog>
  );
}

export default function App() {
  return (
    <Page>
      <Global />
      <Main>
        <TopBar />
        <Tools />
        <Workspace>
          <Toolbox>{[0, 1, 2, 3, 4].map((i) => <ToolboxRow key={i} />)}</Toolbox>
          <Blocks />
        </Workspace>
        <Footer>
          <FooterItems>
            <Dot />
            <UkFlag />
            <FooterTime>2024-03-02 14:35:27 GMT</FooterTime>
            <svg width="21" height="21" viewBox="0 0 21 21" {...line()}><circle cx="10.500" cy="10.500" r="9.500" /><path d="M7.500 8.500c0-4 6-4 6 0 0 2-3 2-3 4.500M10.500 15.500v.5" /></svg>
            <FullScreen aria-label="Full screen"><svg width="20" height="20" viewBox="0 0 20 20" {...line(2)}><path d="M1 6V1h5M14 1h5v5M1 14v5h5M14 19h5v-5" /></svg></FullScreen>
          </FooterItems>
        </Footer>
      </Main>
      <Strip>
        {stripIcons.map(([name, art]) => (
          <StripButton key={name} aria-label={name}><svg width="22" height="22" viewBox="0 0 22 22">{art}</svg></StripButton>
        ))}
        <StripRule />
        <StripButton aria-label="Customize"><svg width="22" height="22" viewBox="0 0 22 22"><path d="M11 3v16M3 11h16" stroke="#eee" strokeWidth="1.500" /></svg></StripButton>
        <StripEnd>
          <StripRule />
          <StripButton aria-label="Settings">
            <svg width="24" height="24" viewBox="0 0 24 24" fill="none" stroke="#e6e6e8" strokeWidth="1.600" strokeLinejoin="round"><path d="M10 2h4l.7 3 2.300 1.300 3-1 2 3.500L19.700 11v2l2.300 2.200-2 3.500-3-1-2.300 1.300L14 22h-4l-.7-3L7 17.700l-3 1-2-3.500L4.300 13v-2L2 8.800l2-3.500 3 1L9.300 5z" /><circle cx="12" cy="12" r="3" /></svg>
          </StripButton>
        </StripEnd>
      </Strip>
      <PageScroll><PageThumb /></PageScroll>
      <Summary />
      <Notices>
        <Notice>REND UP : 0 [] TICK TREND DOWN : 2</Notice>
        <Notice>REND UP : 0 [] TICK TREND DOWN : 1</Notice>
        <Notice $plain />
        <Notice>REND UP : 2 [] TICK TREND DOWN : 1</Notice>
      </Notices>
      <Watermark>Provenbinarybot.com</Watermark>
    </Page>
  );
}
